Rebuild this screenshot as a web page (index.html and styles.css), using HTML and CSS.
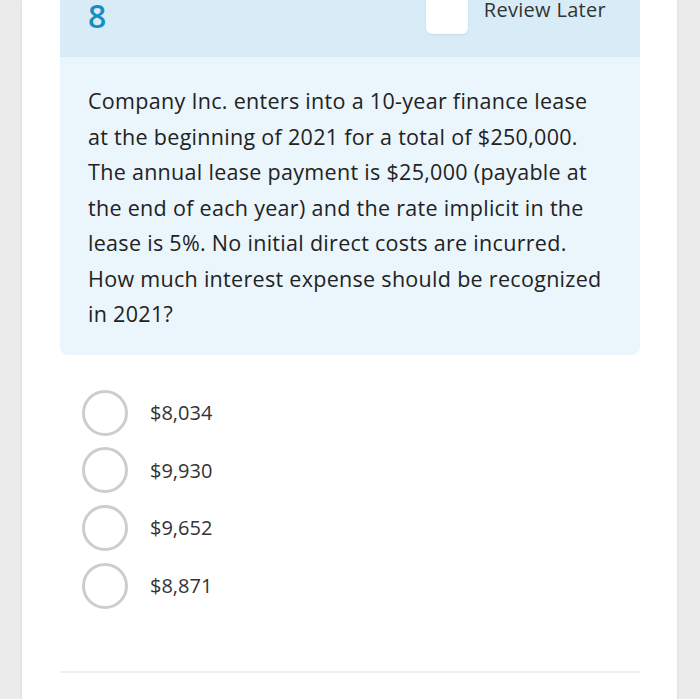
FILE: index.html
```
<!DOCTYPE html>
<html lang="en">
<head>
    <meta charset="UTF-8">
    <meta name="viewport" content="width=device-width, initial-scale=1.0">
    <title>Question 8</title>
    <link rel="stylesheet" href="styles.css">
</head>
<body>

<div class="card">
    <div class="question-header">
        <span class="question-number">8</span>
        <label class="review">
            <span class="review-box"></span>
            <span class="review-text">Review Later</span>
        </label>
    </div>

    <div class="question-body">
        <p>Company Inc. enters into a 10-year finance lease at the beginning of 2021 for a total of $250,000. The annual lease payment is $25,000 (payable at the end of each year) and the rate implicit in the lease is 5%. No initial direct costs are incurred. How much interest expense should be recognized in 2021?</p>
    </div>

    <ul class="options">
        <li class="option"><span class="radio"></span><span class="option-text">$8,034</span></li>
        <li class="option"><span class="radio"></span><span class="option-text">$9,930</span></li>
        <li class="option"><span class="radio"></span><span class="option-text">$9,652</span></li>
        <li class="option"><span class="radio"></span><span class="option-text">$8,871</span></li>
    </ul>

    <hr class="divider">
</div>

</body>
</html>
```

FILE: styles.css
```
/* Basic Reset */
* {
    margin: 0;
    padding: 0;
    box-sizing: border-box;
}

body {
    font-family: "Open Sans", Arial, sans-serif;
    background-color: #ebebeb;
    overflow: hidden;
}

.card {
    margin: 0 23px 0 22px;
    padding: 0 37px 0 38px;
    min-height: 699px;
    background-color: #fff;
    box-shadow: 0 0 3px rgba(0, 0, 0, 0.08);
}

/* Header */
.question-header {
    height: 57px;
    display: flex;
    align-items: flex-start;
    justify-content: space-between;
    padding: 0 34px 0 28px;
    background-color: #d7ecf6;
}

.question-number {
    font-size: 32px;
    font-weight: 600;
    line-height: 32px;
    color: #1a8cc2;
    letter-spacing: 1px;
}

.review {
    display: flex;
    align-items: flex-start;
    gap: 16px;
}

.review-box {
    width: 42px;
    height: 42px;
    margin-top: -8px;
    background-color: #fff;
    border-radius: 6px;
    box-shadow: 0 1px 2px rgba(0, 0, 0, 0.08);
}

.review-text {
    font-size: 20px;
    line-height: 20px;
    letter-spacing: 0.3px;
    color: #333;
}

/* Question */
.question-body {
    background-color: #eaf5fc;
    padding: 26px 28px 23px 28px;
    border-radius: 0 0 8px 8px;
}

.question-body p {
    font-size: 21.5px;
    letter-spacing: 0.3px;
    line-height: 35.5px;
    color: #222;
}

/* Options */
.options {
    list-style: none;
    margin-top: 35px;
    padding-left: 22px;
    display: flex;
    flex-direction: column;
    gap: 11.7px;
}

.option {
    display: flex;
    align-items: center;
    gap: 22px;
}

.radio {
    width: 46px;
    height: 46px;
    border: 3px solid #cdcdcd;
    border-radius: 50%;
    flex-shrink: 0;
}

.option-text {
    font-size: 20px;
    color: #333;
}

.divider {
    border: none;
    height: 2px;
    background-color: #eee;
    margin-top: 62px;
}
```
